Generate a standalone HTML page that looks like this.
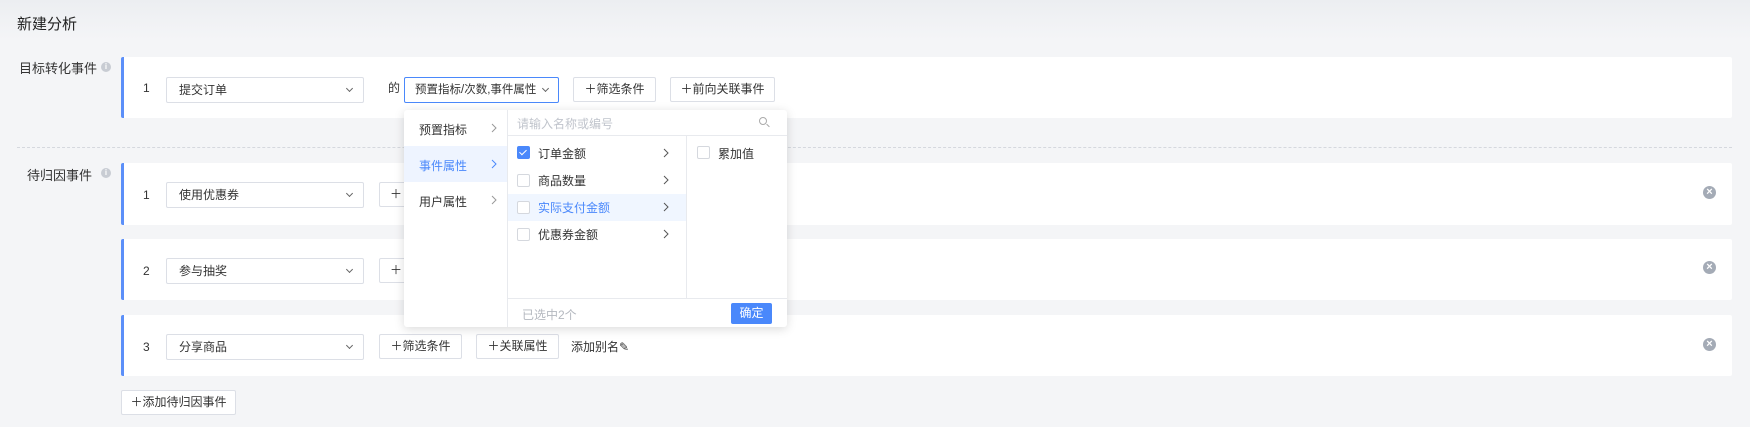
<!DOCTYPE html>
<html><head><meta charset="utf-8"><style>
*{box-sizing:border-box;margin:0;padding:0}
body{width:1750px;height:427px;overflow:hidden;background:#f4f5f7;font-family:"Liberation Sans","Noto Sans CJK SC",sans-serif;color:#333;position:relative;font-size:12px}
.a{position:absolute}
.top{left:0;top:0;width:1750px;height:40px;background:linear-gradient(#eceef1,#f4f5f7)}
.card{position:absolute;left:121px;width:1611px;background:#fff;border-left:3px solid #5b8ff9;border-radius:2px}
.sel{position:absolute;height:26px;border:1px solid #dcdfe6;background:#fff;border-radius:2px;line-height:24px;padding-left:12px;color:#333}
.sel .cv{position:absolute;right:11px;top:8px;width:5px;height:5px;border-right:1px solid #666;border-bottom:1px solid #666;transform:rotate(45deg)}
.btn{position:absolute;height:25px;border:1px solid #dcdfe6;background:#fff;border-radius:2px;line-height:23px;text-align:center;color:#333}
.lbl{position:absolute;font-size:13px;color:#333}
.info{position:absolute;width:10px;height:10px;border-radius:50%;background:#c8ccd3;color:#fff;font-size:8px;line-height:10px;text-align:center;font-weight:bold}
.x{position:absolute;left:1703px;width:13px;height:13px;border-radius:50%;background:#a4abb6;color:#fff;font-size:11px;line-height:13px;text-align:center;font-weight:bold}
.chk{position:absolute;width:13px;height:13px;border:1px solid #d5d8de;border-radius:2px;background:#fff}
.arr{position:absolute;width:6px;height:10px}
</style></head><body>
<div class="a top"></div>
<div class="a" style="left:17px;top:13px;font-size:15px;color:#222">新建分析</div>

<div class="lbl" style="left:19px;top:58px">目标转化事件</div>
<div class="info" style="left:101px;top:62px">i</div>
<div class="card" style="top:57px;height:61px">
 <div class="a" style="left:19px;top:24px">1</div>
 <div class="sel" style="left:42px;top:20px;width:198px">提交订单<span class="cv"></span></div>
 <div class="a" style="left:264px;top:22px">的</div>
 <div class="sel" style="left:280px;top:20px;width:155px;border-color:#4a88fb;padding-left:10px;font-size:11.5px">预置指标/次数,事件属性<span class="cv" style="right:10px"></span></div>
 <div class="btn" style="left:449px;top:20px;width:83px">＋筛选条件</div>
 <div class="btn" style="left:546px;top:20px;width:105px">＋前向关联事件</div>
</div>

<div class="a" style="left:17px;top:147px;width:1715px;border-top:1px dashed #d5d8de"></div>

<div class="lbl" style="left:27px;top:165px">待归因事件</div>
<div class="info" style="left:101px;top:168px">i</div>

<div class="card" style="top:163px;height:62px">
 <div class="a" style="left:19px;top:25px">1</div>
 <div class="sel" style="left:42px;top:19px;width:198px">使用优惠券<span class="cv"></span></div>
 <div class="btn" style="left:255px;top:19px;width:83px;text-align:left;padding-left:10px">＋</div>
</div>
<div class="x" style="top:186px">×</div>
<div class="card" style="top:239px;height:61px">
 <div class="a" style="left:19px;top:25px">2</div>
 <div class="sel" style="left:42px;top:19px;width:198px">参与抽奖<span class="cv"></span></div>
 <div class="btn" style="left:255px;top:19px;width:83px;text-align:left;padding-left:10px">＋</div>
</div>
<div class="x" style="top:261px">×</div>
<div class="card" style="top:315px;height:61px">
 <div class="a" style="left:19px;top:25px">3</div>
 <div class="sel" style="left:42px;top:19px;width:198px">分享商品<span class="cv"></span></div>
 <div class="btn" style="left:255px;top:19px;width:83px">＋筛选条件</div>
 <div class="btn" style="left:352px;top:19px;width:83px">＋关联属性</div>
 <div class="a" style="left:447px;top:23px">添加别名<span style="font-size:12px">✎</span></div>
</div>
<div class="x" style="top:338px">×</div>

<div class="btn" style="left:121px;top:390px;width:115px;height:25px">＋添加待归因事件</div>

<!-- popup -->
<div class="a" style="left:404px;top:110px;width:383px;height:217px;background:#fff;border-radius:3px;box-shadow:0 2px 10px rgba(0,0,0,.15)">
 <div class="a" style="left:103px;top:0;width:1px;height:217px;background:#e8eaee"></div>
 <div class="a" style="left:0;top:36px;width:103px;height:36px;background:#eef4ff"></div>
 <div class="a" style="left:15px;top:11px">预置指标</div>
 <svg class="arr" style="left:87px;top:13px" viewBox="0 0 6 10"><polyline points="1,1 5,5 1,9" fill="none" stroke="#999"/></svg>
 <div class="a" style="left:15px;top:47px;color:#4a88fb">事件属性</div>
 <svg class="arr" style="left:87px;top:49px" viewBox="0 0 6 10"><polyline points="1,1 5,5 1,9" fill="none" stroke="#4a88fb"/></svg>
 <div class="a" style="left:15px;top:83px">用户属性</div>
 <svg class="arr" style="left:87px;top:85px" viewBox="0 0 6 10"><polyline points="1,1 5,5 1,9" fill="none" stroke="#999"/></svg>
 <div class="a" style="left:104px;top:25px;width:279px;height:1px;background:#e8eaee"></div>
 <div class="a" style="left:113px;top:5px;color:#c0c4cc">请输入名称或编号</div>
 <div class="a" style="left:355px;top:7px;width:8px;height:8px;border:1px solid #aaa;border-radius:50%"></div>
 <div class="a" style="left:362px;top:15px;width:4px;height:1px;background:#aaa;transform:rotate(45deg)"></div>
 <div class="a" style="left:282px;top:26px;width:1px;height:162px;background:#e8eaee"></div>
 <div class="a" style="left:104px;top:84px;width:178px;height:27px;background:#f0f6ff"></div>
 <div class="chk" style="left:113px;top:36px;background:#4a88fb;border-color:#4a88fb"></div>
 <div class="a" style="left:117px;top:38px;width:4px;height:7px;border-right:1.5px solid #fff;border-bottom:1.5px solid #fff;transform:rotate(45deg)"></div>
 <div class="a" style="left:134px;top:35px">订单金额</div>
 <svg class="arr" style="left:259px;top:38px" viewBox="0 0 6 10"><polyline points="1,1 5,5 1,9" fill="none" stroke="#555"/></svg>
 <div class="chk" style="left:113px;top:64px"></div>
 <div class="a" style="left:134px;top:62px">商品数量</div>
 <svg class="arr" style="left:259px;top:65px" viewBox="0 0 6 10"><polyline points="1,1 5,5 1,9" fill="none" stroke="#555"/></svg>
 <div class="chk" style="left:113px;top:91px"></div>
 <div class="a" style="left:134px;top:89px;color:#4a88fb">实际支付金额</div>
 <svg class="arr" style="left:259px;top:92px" viewBox="0 0 6 10"><polyline points="1,1 5,5 1,9" fill="none" stroke="#555"/></svg>
 <div class="chk" style="left:113px;top:118px"></div>
 <div class="a" style="left:134px;top:116px">优惠券金额</div>
 <svg class="arr" style="left:259px;top:119px" viewBox="0 0 6 10"><polyline points="1,1 5,5 1,9" fill="none" stroke="#555"/></svg>
 <div class="chk" style="left:293px;top:36px"></div>
 <div class="a" style="left:314px;top:35px">累加值</div>
 <div class="a" style="left:104px;top:188px;width:279px;height:1px;background:#e8eaee"></div>
 <div class="a" style="left:118px;top:196px;color:#b4b8bf">已选中2个</div>
 <div class="a" style="left:327px;top:193px;width:41px;height:21px;background:#4a88fb;color:#fff;border-radius:2px;text-align:center;line-height:21px">确定</div>
</div>
</body></html>
